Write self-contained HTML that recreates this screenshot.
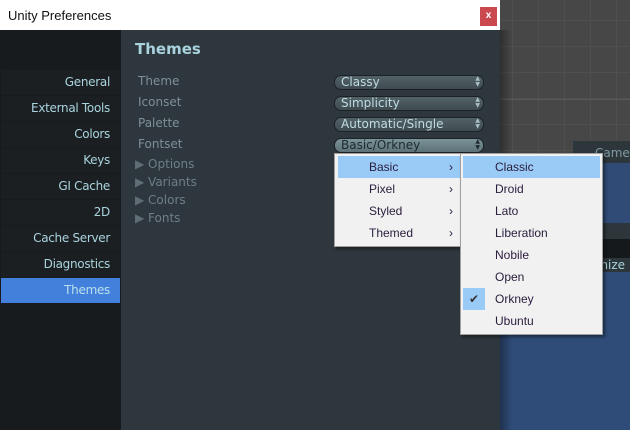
<!DOCTYPE html>
<html><head><style>
*{margin:0;padding:0;box-sizing:border-box}
body{width:630px;height:430px;overflow:hidden;position:relative;background:#474747;font-family:"DejaVu Sans","Liberation Sans",sans-serif}
.grid{position:absolute;left:500px;top:0;width:130px;height:430px;
background-image:linear-gradient(#4f4f4f 1px,transparent 1px),linear-gradient(90deg,#4f4f4f 1px,transparent 1px);background-size:26px 26px;background-position:12px 20px}
.abs{position:absolute}
.title{left:0;top:0;width:500px;height:30px;background:#fff;font:13px "Liberation Sans",sans-serif;color:#111;padding:8px 8px}
.close{left:480px;top:7px;width:17px;height:19px;background:#c9494f;color:#fff;font:bold 10px sans-serif;text-align:center;line-height:18px}
.side{left:0;top:30px;width:121px;height:400px;background:#171b1e}
.item{position:absolute;left:1px;width:119px;height:25px;background:#1b1f22;color:#a9d4de;font-size:12px;text-align:right;padding-right:10px;line-height:25px;letter-spacing:-0.3px}
.content{left:121px;top:30px;width:379px;height:400px;background:#2e373d}
.h{left:135px;top:40px;color:#a9d3dd;font-size:15px;font-weight:bold}
.lbl{left:138px;color:#7e9097;font-size:12px}
.tri{color:#5e6e74;left:135px;font-size:12px}
.dd{left:334px;width:150px;height:15px;border-radius:7px;background:linear-gradient(#536267,#3e4b50);border:1px solid #1b2124;color:#bfdde3;font-size:12px;line-height:12px;padding-left:6px}
.ar{position:absolute;right:3px;top:0px;font-size:6px;line-height:6px;color:#a9c1c6;text-align:center}
.menu{background:#f1f1f1;border:1px solid #a0a0a0;box-shadow:2px 2px 3px rgba(0,0,0,.45);font:12px "Liberation Sans",sans-serif;color:#2a1c3c}
.mi{position:absolute;height:22px;line-height:22px}
</style></head><body>
<div class="grid"></div>
<div class="abs" style="left:500px;top:99px;width:130px;height:1px;background:#5a5a5a"></div>
<div class="abs" style="left:573px;top:141px;width:57px;height:22px;background:#2d363b;color:#7f9aa2;font-size:12px;padding:5px 0 0 22px">Camera</div>
<div class="abs" style="left:573px;top:163px;width:57px;height:60px;background:#2f4b76"></div>
<div class="abs" style="left:573px;top:223px;width:57px;height:16px;background:#2d363b"></div>
<div class="abs" style="left:573px;top:239px;width:57px;height:19px;background:#16191b"></div>
<div class="abs" style="left:573px;top:258px;width:57px;height:14px;background:#2d363b;color:#a9d3dd;font-size:12px;line-height:14px;padding-left:20px">imize</div>
<div class="abs" style="left:500px;top:272px;width:130px;height:158px;background:#2f4c78"></div>
<div class="abs" style="left:500px;top:30px;width:12px;height:400px;background:linear-gradient(90deg,rgba(0,0,0,.35),transparent)"></div>

<div class="abs title">Unity Preferences</div>
<div class="abs close">x</div>
<div class="abs side"></div>
<div class="item" style="top:70px">General</div>
<div class="item" style="top:96px">External Tools</div>
<div class="item" style="top:122px">Colors</div>
<div class="item" style="top:148px">Keys</div>
<div class="item" style="top:174px">GI Cache</div>
<div class="item" style="top:200px">2D</div>
<div class="item" style="top:226px">Cache Server</div>
<div class="item" style="top:252px">Diagnostics</div>
<div class="item" style="top:278px;background:#4380dc;color:#b9e0ea">Themes</div>
<div class="abs content"></div>
<div class="abs h">Themes</div>
<div class="abs lbl" style="top:74px">Theme</div>
<div class="abs lbl" style="top:95px">Iconset</div>
<div class="abs lbl" style="top:116px">Palette</div>
<div class="abs lbl" style="top:137px">Fontset</div>
<div class="abs tri" style="top:157px">▶ <span style="color:#6d7f86">Options</span></div>
<div class="abs tri" style="top:175px">▶ <span style="color:#6d7f86">Variants</span></div>
<div class="abs tri" style="top:193px">▶ <span style="color:#6d7f86">Colors</span></div>
<div class="abs tri" style="top:211px">▶ <span style="color:#6d7f86">Fonts</span></div>
<div class="abs dd" style="top:75px">Classy<span class="ar">▲<br>▼</span></div>
<div class="abs dd" style="top:96px">Simplicity<span class="ar">▲<br>▼</span></div>
<div class="abs dd" style="top:117px">Automatic/Single<span class="ar">▲<br>▼</span></div>
<div class="abs dd" style="top:138px;background:linear-gradient(#7a9398,#5c7277);color:#1f2a2e">Basic/Orkney<span class="ar" style="color:#1f2a2e">▲<br>▼</span></div>

<div class="abs menu" style="left:334px;top:153px;width:128px;height:94px">
<div class="mi" style="left:3px;top:2px;width:122px;background:#99cbf6"></div>
<div class="mi" style="left:34px;top:2px">Basic</div><div class="mi" style="left:114px;top:2px">›</div>
<div class="mi" style="left:34px;top:24px">Pixel</div><div class="mi" style="left:114px;top:24px">›</div>
<div class="mi" style="left:34px;top:46px">Styled</div><div class="mi" style="left:114px;top:46px">›</div>
<div class="mi" style="left:34px;top:68px">Themed</div><div class="mi" style="left:114px;top:68px">›</div>
</div>
<div class="abs menu" style="left:460px;top:153px;width:143px;height:182px">
<div class="mi" style="left:2px;top:2px;width:137px;background:#99cbf6"></div>
<div class="mi" style="left:34px;top:2px">Classic</div>
<div class="mi" style="left:34px;top:24px">Droid</div>
<div class="mi" style="left:34px;top:46px">Lato</div>
<div class="mi" style="left:34px;top:68px">Liberation</div>
<div class="mi" style="left:34px;top:90px">Nobile</div>
<div class="mi" style="left:34px;top:112px">Open</div>
<div class="mi" style="left:2px;top:134px;width:22px;background:#99cbf6;text-align:center;color:#333">✔</div>
<div class="mi" style="left:34px;top:134px">Orkney</div>
<div class="mi" style="left:34px;top:156px">Ubuntu</div>
</div>
</body></html>
